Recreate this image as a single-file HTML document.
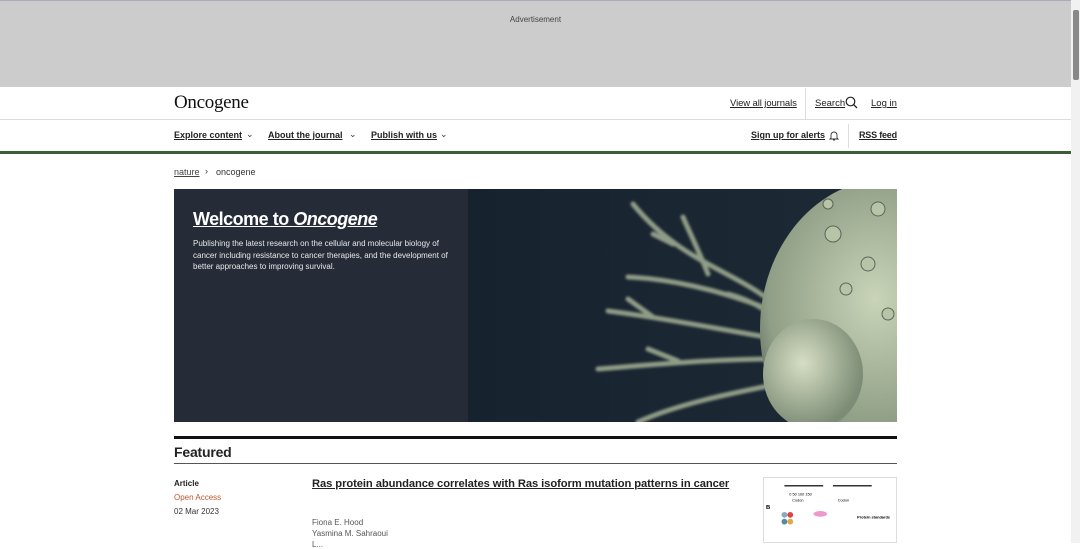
<!DOCTYPE html>
<html><head><meta charset="utf-8"><style>
*{margin:0;padding:0;box-sizing:border-box}
body{width:1080px;height:543px;overflow:hidden;background:#fff;font-family:"Liberation Sans",sans-serif;color:#222;position:relative}
a{color:#222}
.ad{position:absolute;left:0;top:0;width:1071px;height:87px;background:#cccccc;border-top:1px solid #aab}
.ad span{position:absolute;top:14px;left:0;width:1071px;text-align:center;font-size:8px;color:#444}
.sb{position:absolute;left:1071px;top:0;width:9px;height:543px;background:#f1f1f1}
.sb i{position:absolute;left:2px;top:10px;width:6px;height:70px;background:#888;border-radius:2px}
.logo{position:absolute;left:174px;top:92px;font-family:"Liberation Serif",serif;font-size:19px;color:#111;letter-spacing:-0.3px}
.t{position:absolute;font-size:10px;text-decoration:underline}
.b{font-weight:bold}
.hr1{position:absolute;left:0;top:119px;width:1071px;height:1px;background:#ddd}
.vl{position:absolute;width:1px;background:#ddd}
.green{position:absolute;left:0;top:151px;width:1071px;height:3px;background:#3d5e33}
.hero{position:absolute;left:174px;top:189px;width:723px;height:233px;background:#262b38;overflow:hidden}
.hero h1{position:absolute;left:19px;top:20px;font-size:18px;color:#fff;text-decoration:underline;font-weight:bold;letter-spacing:-0.5px}
.hero p{position:absolute;left:19px;top:49px;width:262px;font-size:8px;line-height:11.7px;color:#e8e8e8}
.feat{position:absolute;left:174px;top:436px;width:723px;height:3px;background:#111}
.feath{position:absolute;left:174px;top:444px;font-size:14px;font-weight:bold;color:#222;letter-spacing:-0.2px}
.hr2{position:absolute;left:174px;top:463px;width:723px;height:1px;background:#555}
.s{position:absolute;font-size:8px;color:#333}
</style></head><body>
<div class="ad"><span>Advertisement</span></div>
<div class="sb"><i></i></div>
<div class="logo">Oncogene</div>
<a class="t" style="left:730px;top:98px;font-size:9.5px;letter-spacing:-0.1px">View all journals</a>
<div class="vl" style="left:805px;top:88px;height:31px"></div>
<a class="t" style="left:815px;top:98px;font-size:9.5px">Search</a>
<svg style="position:absolute;left:845px;top:96px" width="13" height="13" viewBox="0 0 13 13"><circle cx="5.5" cy="5.5" r="4.3" fill="none" stroke="#222" stroke-width="1.2"/><path d="M8.6 8.6L12 12" stroke="#222" stroke-width="1.3"/></svg>
<a class="t" style="left:871px;top:98px;font-size:9.5px">Log in</a>
<div class="hr1"></div>
<a class="t b" style="left:174px;top:130px;font-size:9px">Explore content</a><span class="s" style="left:246px;top:129px;font-size:9px">⌄</span>
<a class="t b" style="left:268px;top:130px;font-size:9px">About the journal</a><span class="s" style="left:349px;top:129px;font-size:9px">⌄</span>
<a class="t b" style="left:371px;top:130px;font-size:9px">Publish with us</a><span class="s" style="left:440px;top:129px;font-size:9px">⌄</span>
<a class="t b" style="left:751px;top:130px;font-size:9px">Sign up for alerts</a>
<svg style="position:absolute;left:829px;top:130px" width="10" height="11" viewBox="0 0 10 11"><path d="M2 8V5a3 3 0 0 1 6 0v3l1 1H1z M4 10h2" fill="none" stroke="#333" stroke-width="0.9"/></svg>
<div class="vl" style="left:848px;top:124px;height:24px"></div>
<a class="t b" style="left:859px;top:130px;font-size:9px;letter-spacing:-0.2px">RSS feed</a>
<div class="green"></div>
<a class="t" style="left:174px;top:167px;font-size:9px;color:#444">nature</a>
<span class="s" style="left:205px;top:166px;font-size:9px">›</span>
<span class="s" style="left:216px;top:167px;font-size:9px">oncogene</span>
<div class="hero">
<svg style="position:absolute;left:294px;top:0" width="429" height="233" viewBox="0 0 429 233">
<defs><radialGradient id="c" cx="0.45" cy="0.4" r="0.6"><stop offset="0" stop-color="#c9d4b8"/><stop offset="0.7" stop-color="#8f9e86"/><stop offset="1" stop-color="#3e4a48"/></radialGradient>
<radialGradient id="d" cx="0.4" cy="0.4" r="0.6"><stop offset="0" stop-color="#d6dfc4"/><stop offset="1" stop-color="#7d8c76"/></radialGradient>
<linearGradient id="bg" x1="0" x2="1"><stop offset="0" stop-color="#17222f"/><stop offset="1" stop-color="#1d2a35"/></linearGradient>
<filter id="bl"><feGaussianBlur stdDeviation="1.2"/></filter></defs>
<rect width="429" height="233" fill="url(#bg)"/>
<g stroke="#8f9c86" stroke-width="5" fill="none" stroke-linecap="round" filter="url(#bl)">
<path d="M300 110 C260 80 210 70 165 15"/><path d="M205 55 L185 45"/><path d="M240 85 C230 60 220 40 215 28"/>
<path d="M300 120 C250 100 200 90 160 88"/><path d="M310 150 C250 140 190 128 140 122"/><path d="M185 128 L160 110"/>
<path d="M310 170 C250 170 190 175 130 180"/><path d="M210 172 L180 160"/><path d="M310 195 C260 205 210 215 170 233"/>
<path d="M320 140 C300 120 280 110 260 105"/>
</g>
<ellipse cx="420" cy="140" rx="128" ry="150" fill="url(#c)"/>
<ellipse cx="345" cy="185" rx="50" ry="55" fill="url(#d)"/>
<g fill="#b8c4a8" stroke="#5a6658" stroke-width="1"><circle cx="365" cy="45" r="8"/><circle cx="400" cy="75" r="7"/><circle cx="378" cy="100" r="6"/><circle cx="420" cy="125" r="6"/><circle cx="410" cy="20" r="7"/><circle cx="360" cy="15" r="5"/></g>
</svg>
<h1>Welcome to <i>Oncogene</i></h1>
<p>Publishing the latest research on the cellular and molecular biology of cancer including resistance to cancer therapies, and the development of better approaches to improving survival.</p>
</div>
<div class="feat"></div>
<div class="feath">Featured</div>
<div class="hr2"></div>
<div class="s" style="left:174px;top:479px;font-weight:bold;color:#222">Article</div>
<div class="s" style="left:174px;top:493px;color:#c0562e">Open Access</div>
<div class="s" style="left:174px;top:507px">02 Mar 2023</div>
<a class="t b" style="left:312px;top:478px;font-size:11.2px;letter-spacing:-0.08px;color:#222">Ras protein abundance correlates with Ras isoform mutation patterns in cancer</a>
<div class="s" style="left:312px;top:518px;color:#555">Fiona E. Hood</div>
<div class="s" style="left:312px;top:529px;color:#555">Yasmina M. Sahraoui</div>
<div class="s" style="left:312px;top:540px;color:#555">L...</div>
<svg style="position:absolute;left:763px;top:477px;border:1px solid #ddd" width="134" height="66" viewBox="0 0 134 66">
<rect width="134" height="66" fill="#fff"/>
<path d="M20 8H60M70 8H110" stroke="#333" stroke-width="1.5"/>
<text x="25" y="18" font-size="4" font-family="Liberation Sans">0  50 100 150</text><text x="28" y="24" font-size="4" font-family="Liberation Sans">Codon</text><text x="75" y="24" font-size="4" font-family="Liberation Sans">Codon</text>
<text x="1" y="32" font-size="6" font-weight="bold" font-family="Liberation Sans">B</text>
<circle cx="20" cy="38" r="3" fill="#8ab"/><circle cx="26" cy="38" r="3" fill="#d44"/><circle cx="20" cy="45" r="3" fill="#58a"/><circle cx="26" cy="45" r="3" fill="#da4"/>
<ellipse cx="57" cy="37" rx="7" ry="3" fill="#e9c"/>
<text x="95" y="42" font-size="4" font-weight="bold" font-family="Liberation Sans">Protein standards</text>
</svg>
</body></html>
